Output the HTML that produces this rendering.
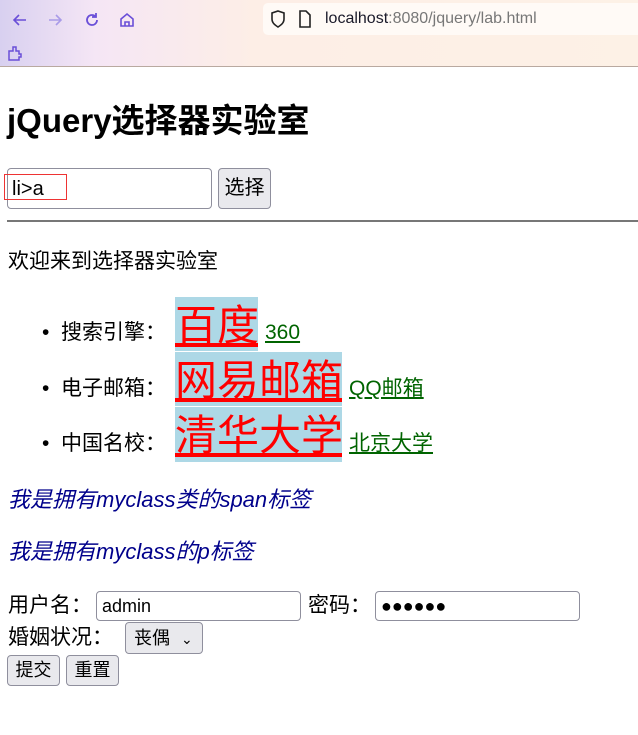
<!DOCTYPE html>
<html><head><meta charset="utf-8"><style>
*{margin:0;padding:0;box-sizing:border-box}
body{width:638px;height:735px;position:relative;overflow:hidden;background:#fff;font-family:"Liberation Sans","Noto Sans CJK SC",sans-serif;font-size:20px;color:#000}
.a{position:absolute;white-space:nowrap}
.chrome{position:absolute;left:0;top:0;width:638px;height:67px;background:linear-gradient(90deg,#d8d0f0 0%,#f5e6f5 15%,#fdeee6 40%,#fdf1e6 100%);border-bottom:1px solid #b9a9a0}
.url{position:absolute;left:263px;top:3px;width:380px;height:32px;background:#fffaf6;border-radius:5px;font-size:16px;line-height:32px;padding-left:62px;color:#1a1a2a}
.box{border:1px solid #8f8f9d;border-radius:4px;background:#fff}
.btn{border:1px solid #8f8f9d;border-radius:4px;background:#e9e9ed;text-align:center}
.big{color:#f00;background:#add8e6;text-decoration:underline;font-size:42px;line-height:50px;padding-top:4px;overflow:hidden}
.g{color:#006400;text-decoration:underline;font-size:21px}
.i{color:#00008b;font-style:italic;font-size:22px}
.lab{font-size:21px}
</style></head><body>
<div class="chrome">
<svg class="a" style="left:10px;top:10px" width="20" height="20" viewBox="0 0 20 20"><path d="M16 10H4M9 5l-5 5 5 5" stroke="#6a4fd8" stroke-width="1.6" fill="none"/></svg>
<svg class="a" style="left:45px;top:10px" width="20" height="20" viewBox="0 0 20 20"><path d="M4 10h12M11 5l5 5-5 5" stroke="#a99be8" stroke-width="1.6" fill="none"/></svg>
<svg class="a" style="left:82px;top:10px" width="20" height="20" viewBox="0 0 20 20"><path d="M15 10a5 5 0 1 1-2-4M14 3v4h-4" stroke="#6a4fd8" stroke-width="1.8" fill="none"/></svg>
<svg class="a" style="left:117px;top:10px" width="20" height="20" viewBox="0 0 20 20"><path d="M4 9l6-5 6 5v7H4zM8 16v-4h4v4" stroke="#6a4fd8" stroke-width="1.6" fill="none"/></svg>
<svg class="a" style="left:7px;top:44px" width="16" height="18" viewBox="0 0 16 18"><path d="M2 16V7h4V3h3v4h3v3h2v3h-2v3z" stroke="#6a4fd8" stroke-width="1.5" fill="none"/></svg>
<div class="url">localhost<span style="color:#777">:8080/jquery/lab.html</span></div>
<svg class="a" style="left:270px;top:10px" width="16" height="18" viewBox="0 0 16 18"><path d="M8 1l6 2v6c0 4-3 6-6 8-3-2-6-4-6-8V3z" stroke="#222" stroke-width="1.6" fill="none"/></svg>
<svg class="a" style="left:298px;top:10px" width="14" height="18" viewBox="0 0 14 18"><path d="M2 1h6l4 4v12H2z" stroke="#222" stroke-width="1.6" fill="none"/></svg>
</div>
<div class="a" style="left:7px;top:101px;font-size:33px;font-weight:bold;line-height:40px">jQuery选择器实验室</div>
<div class="a box" style="left:7px;top:168px;width:205px;height:41px"></div>
<div class="a" style="left:12px;top:177px;line-height:24px">li&gt;a</div>
<div class="a" style="left:4px;top:174px;width:63px;height:26px;border:1px solid #e33"></div>
<div class="a btn" style="left:218px;top:168px;width:53px;height:41px;line-height:39px">选择</div>
<div class="a" style="left:7px;top:220px;width:631px;height:2px;background:#777"></div>
<div class="a lab" style="left:8px;top:248px;line-height:28px">欢迎来到选择器实验室</div>
<div class="a lab" style="left:42px;top:319px;line-height:28px">•&nbsp; 搜索引擎：</div>
<div class="a big" style="left:175px;top:297px;height:54px;width:83px">百度</div>
<div class="a g" style="left:265px;top:319px;line-height:28px">360</div>
<div class="a lab" style="left:42px;top:375px;line-height:28px">•&nbsp; 电子邮箱：</div>
<div class="a big" style="left:175px;top:352px;height:54px;width:167px">网易邮箱</div>
<div class="a g" style="left:349px;top:375px;line-height:28px">QQ邮箱</div>
<div class="a lab" style="left:42px;top:430px;line-height:28px">•&nbsp; 中国名校：</div>
<div class="a big" style="left:175px;top:407px;height:55px;width:167px">清华大学</div>
<div class="a g" style="left:349px;top:430px;line-height:28px">北京大学</div>
<div class="a i" style="left:8px;top:486px;line-height:28px">我是拥有myclass类的span标签</div>
<div class="a i" style="left:8px;top:538px;line-height:28px">我是拥有myclass的p标签</div>
<div class="a lab" style="left:8px;top:592px;line-height:28px">用户名：</div>
<div class="a box" style="left:96px;top:591px;width:205px;height:30px;font-size:18px;line-height:28px;padding-left:5px">admin</div>
<div class="a lab" style="left:308px;top:592px;line-height:28px">密码：</div>
<div class="a box" style="left:375px;top:591px;width:205px;height:30px;font-size:18px;line-height:28px;padding-left:5px">●●●●●●</div>
<div class="a lab" style="left:8px;top:624px;line-height:28px">婚姻状况：</div>
<div class="a btn" style="left:125px;top:622px;width:78px;height:32px;line-height:30px;text-align:left;padding-left:8px;font-size:18px">丧偶 <span style="font-size:14px;margin-left:6px">⌄</span></div>
<div class="a btn" style="left:7px;top:655px;width:53px;height:31px;line-height:29px;font-size:18px">提交</div>
<div class="a btn" style="left:66px;top:655px;width:53px;height:31px;line-height:29px;font-size:18px">重置</div>
</body></html>
